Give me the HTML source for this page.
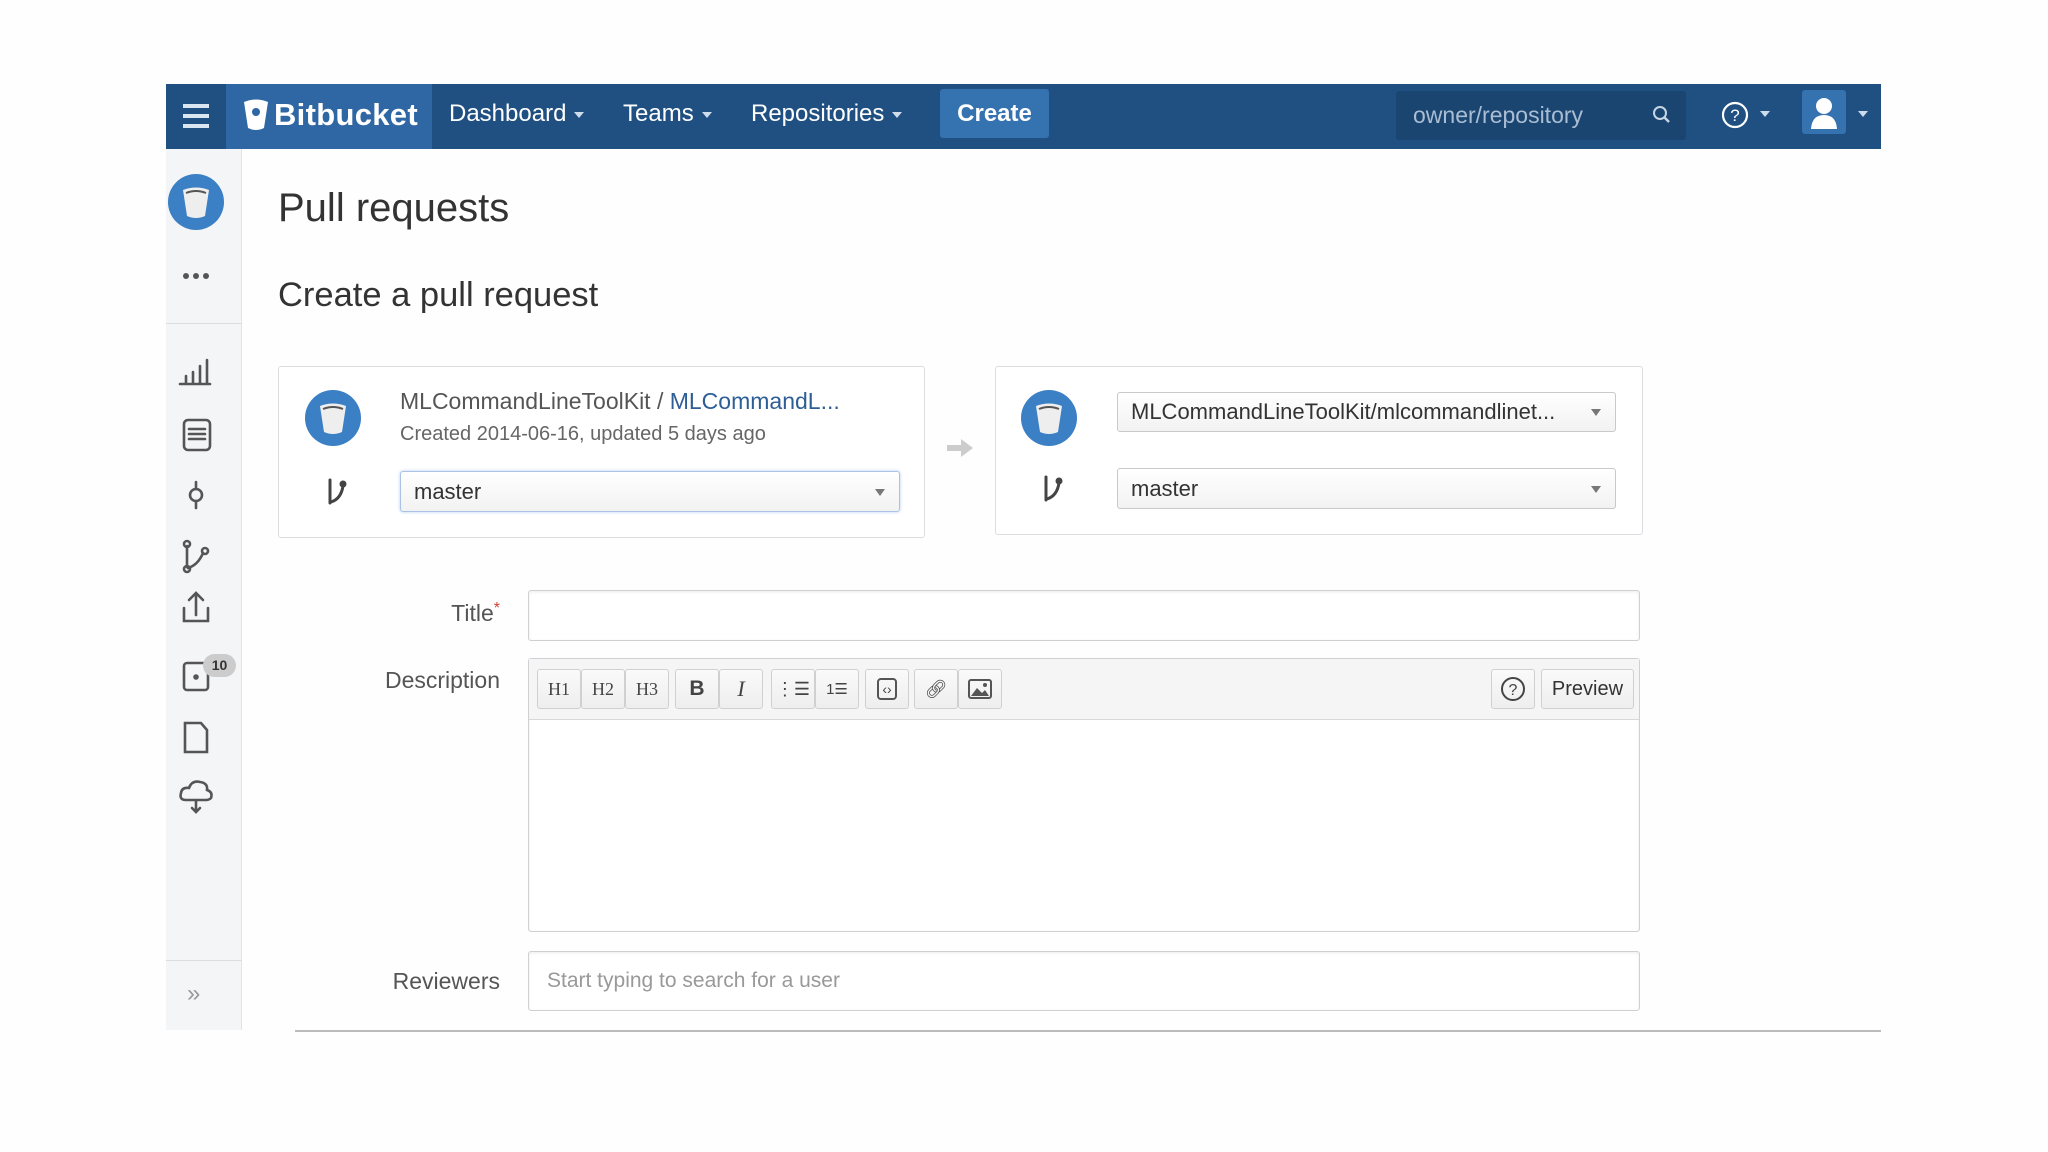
<!DOCTYPE html>
<html><head><meta charset="utf-8"><style>
*{box-sizing:border-box;margin:0;padding:0}
body{width:2048px;height:1152px;background:#fefefe;font-family:"Liberation Sans",Arial,sans-serif;position:relative;overflow:hidden;color:#333}
.a{position:absolute}
.nav{left:166px;top:84px;width:1715px;height:65px;background:#205081}
.navt{color:#fff;font-size:24px;top:100px}
.caret{display:inline-block;width:0;height:0;border-left:5px solid transparent;border-right:5px solid transparent;border-top:6px solid #cfdcec;vertical-align:middle;margin-left:8px}
.side{left:166px;top:149px;width:76px;height:881px;background:#f4f5f7;border-right:1px solid #e2e3e6}
.card{background:#fff;border:1px solid #dcdde0;border-radius:3px}
.sel{background:linear-gradient(#fff,#f2f2f2);border:1px solid #c8c9cc;border-radius:3px;font-size:22px;color:#333;padding-left:13px;display:flex;align-items:center}
.sel:after{content:"";position:absolute;right:14px;top:50%;margin-top:-3px;border-left:5px solid transparent;border-right:5px solid transparent;border-top:7px solid #777}
.lab{font-size:23px;color:#555;text-align:right;width:300px;left:200px}
.inp{background:#fff;border:1px solid #cfd0d3;border-radius:3px;box-shadow:inset 0 1px 3px rgba(0,0,0,.08)}
.tb{top:669px;height:40px;background:linear-gradient(#fafafa,#eeeeee);border:1px solid #d0d0d0;border-radius:3px;display:flex;align-items:center;justify-content:center;font-family:"Liberation Serif",serif;font-size:18px;color:#444}
</style></head><body>
<div class="a nav"></div>
<div class="a" style="left:226px;top:84px;width:206px;height:65px;background:#2f66a4"></div>
<div class="a" style="left:183px;top:104px;width:26px;height:4px;background:#dbe6f3;box-shadow:0 10px 0 #dbe6f3,0 20px 0 #dbe6f3"></div>
<svg class="a" style="left:243px;top:99px" width="26" height="32" viewBox="0 0 26 32"><path d="M1 3 Q13 -2 25 3 L21 29 Q13 33 5 29Z" fill="#fff"/><circle cx="13" cy="13" r="4" fill="#2f66a4"/></svg>
<div class="a" style="left:274px;top:97px;color:#fff;font-size:31px;font-weight:bold;letter-spacing:0.3px">Bitbucket</div>
<div class="a navt" style="left:449px">Dashboard<span class="caret"></span></div>
<div class="a navt" style="left:623px">Teams<span class="caret"></span></div>
<div class="a navt" style="left:751px">Repositories<span class="caret"></span></div>
<div class="a" style="left:940px;top:89px;width:109px;height:49px;background:#3572b0;border-radius:3px;color:#fff;font-size:24px;font-weight:bold;text-align:center;line-height:49px">Create</div>
<div class="a" style="left:1396px;top:91px;width:290px;height:49px;background:#1a4570;border-radius:3px;color:#a9bdd4;font-size:23px;padding:11px 0 0 17px">owner/repository</div>
<svg class="a" style="left:1651px;top:104px" width="22" height="22"><circle cx="9" cy="9" r="6" fill="none" stroke="#c7d4e4" stroke-width="2"/><path d="M13 13 L18 18" stroke="#c7d4e4" stroke-width="2.5"/></svg>
<svg class="a" style="left:1720px;top:100px" width="30" height="30"><circle cx="15" cy="15" r="12" fill="none" stroke="#fff" stroke-width="2.2"/><text x="15" y="21" font-size="17" fill="#fff" text-anchor="middle" font-family="Liberation Sans">?</text></svg>
<span class="a caret" style="left:1752px;top:111px"></span>
<div class="a" style="left:1802px;top:90px;width:44px;height:44px;background:#3572b0;border-radius:3px"></div>
<svg class="a" style="left:1809px;top:96px" width="30" height="34"><circle cx="15" cy="10" r="8" fill="#fff"/><path d="M2 33 Q3 19 15 19 Q27 19 28 33Z" fill="#fff"/></svg>
<span class="a caret" style="left:1850px;top:111px"></span>

<div class="a side"></div>
<div class="a" style="left:166px;top:323px;width:76px;height:1px;background:#dcdde0"></div>
<div class="a" style="left:166px;top:960px;width:76px;height:1px;background:#dcdde0"></div>
<div class="a" style="left:168px;top:174px;width:56px;height:56px;border-radius:50%;background:#3b7fc4"></div>
<svg class="a" style="left:181px;top:186px" width="30" height="34"><path d="M2 4 Q15 -1 28 4 L24 30 Q15 34 6 30Z" fill="#eee"/><path d="M5 7 Q15 3 25 7" stroke="#555" stroke-width="2" fill="none"/></svg>
<div class="a" style="left:183px;top:273px;width:6px;height:6px;border-radius:50%;background:#555;box-shadow:10px 0 0 #555,20px 0 0 #555"></div>
<svg class="a" style="left:176px;top:350px" width="44" height="500" fill="none" stroke="#555" stroke-width="2.6" stroke-linecap="round">
<path d="M4 34 H34 M10 33 V26 M17 33 V22 M24 33 V16 M31 33 V10"/>
<rect x="8" y="70" width="26" height="30" rx="4"/><path d="M13 79 H29 M13 84 H29 M13 89 H29"/>
<circle cx="20" cy="145" r="6"/><path d="M20 132 V139 M20 151 V158"/>
<circle cx="11" cy="194" r="3"/><circle cx="11" cy="219" r="3"/><circle cx="29" cy="201" r="3"/><path d="M11 196 V217 M27 203 Q22 215 12 218"/>
<path d="M8 258 V271 H32 V258 M20 265 V243 M13 250 L20 243 L27 250"/>
<rect x="8" y="313" width="24" height="27" rx="3"/><circle cx="20" cy="327" r="1.5" fill="#555"/>
<path d="M9 373 H25 L31 380 V402 H9Z"/>
<path d="M10 450 Q3 450 5 443 Q6 437 13 438 Q16 430 24 432 Q32 433 31 440 Q37 442 35 448 Q33 450 30 450 Z M20 450 V462 M16 458 L20 462 L24 458"/>
</svg>
<div class="a" style="left:203px;top:654px;width:33px;height:23px;border-radius:12px;background:#ccc;font-size:14px;font-weight:bold;color:#333;text-align:center;line-height:23px">10</div>
<div class="a" style="left:187px;top:980px;font-size:24px;color:#999">»</div>

<div class="a" style="left:278px;top:186px;font-size:40px;color:#333">Pull requests</div>
<div class="a" style="left:278px;top:276px;font-size:34.5px;color:#333">Create a pull request</div>

<div class="a card" style="left:278px;top:366px;width:647px;height:172px"></div>
<div class="a" style="left:305px;top:390px;width:56px;height:56px;border-radius:50%;background:#3b7fc4"></div>
<svg class="a" style="left:318px;top:402px" width="30" height="34"><path d="M2 4 Q15 -1 28 4 L24 30 Q15 34 6 30Z" fill="#eee"/><path d="M5 7 Q15 3 25 7" stroke="#555" stroke-width="2" fill="none"/></svg>
<div class="a" style="left:400px;top:388px;font-size:23px;color:#555;white-space:nowrap">MLCommandLineToolKit / <span style="color:#2d5e95">MLCommandL...</span></div>
<div class="a" style="left:400px;top:423px;font-size:20px;color:#666">Created 2014-06-16, updated 5 days ago</div>
<svg class="a" style="left:322px;top:477px" width="28" height="30" fill="none" stroke="#444" stroke-width="3" stroke-linecap="round"><path d="M8 3 V26 M21 9 Q19 22 9 25"/><circle cx="21" cy="7" r="2" fill="#444"/></svg>
<div class="a sel" style="left:400px;top:471px;width:500px;height:41px;border-color:#a9c2e6;box-shadow:0 0 3px #b7cdee">master</div>

<svg class="a" style="left:945px;top:436px" width="30" height="24"><path d="M2 9 H16 V3 L28 12 L16 21 V15 H2Z" fill="#ccc"/></svg>

<div class="a card" style="left:995px;top:366px;width:648px;height:169px"></div>
<div class="a" style="left:1021px;top:390px;width:56px;height:56px;border-radius:50%;background:#3b7fc4"></div>
<svg class="a" style="left:1034px;top:402px" width="30" height="34"><path d="M2 4 Q15 -1 28 4 L24 30 Q15 34 6 30Z" fill="#eee"/><path d="M5 7 Q15 3 25 7" stroke="#555" stroke-width="2" fill="none"/></svg>
<div class="a sel" style="left:1117px;top:392px;width:499px;height:40px">MLCommandLineToolKit/mlcommandlinet...</div>
<svg class="a" style="left:1038px;top:474px" width="28" height="30" fill="none" stroke="#444" stroke-width="3" stroke-linecap="round"><path d="M8 3 V26 M21 9 Q19 22 9 25"/><circle cx="21" cy="7" r="2" fill="#444"/></svg>
<div class="a sel" style="left:1117px;top:468px;width:499px;height:41px">master</div>

<div class="a lab" style="top:600px">Title<span style="color:#d04437;font-size:16px;vertical-align:top">*</span></div>
<div class="a inp" style="left:528px;top:590px;width:1112px;height:51px"></div>
<div class="a lab" style="top:667px">Description</div>
<div class="a inp" style="left:528px;top:658px;width:1112px;height:274px"></div>
<div class="a" style="left:529px;top:659px;width:1110px;height:61px;background:#f5f5f5;border-bottom:1px solid #d8d8d8"></div>
<div class="a tb" style="left:537px;width:44px">H1</div>
<div class="a tb" style="left:581px;width:44px">H2</div>
<div class="a tb" style="left:625px;width:44px">H3</div>
<div class="a tb" style="left:675px;width:44px;font-family:'Liberation Sans';font-weight:bold;font-size:21px">B</div>
<div class="a tb" style="left:719px;width:44px;font-style:italic;font-size:22px">I</div>
<div class="a tb" style="left:771px;width:44px;font-family:'Liberation Sans'">⋮☰</div>
<div class="a tb" style="left:815px;width:44px;font-family:'Liberation Sans';font-size:15px">1☰</div>
<div class="a tb" style="left:865px;width:44px;font-family:'Liberation Sans';font-size:14px"><span style="border:2px solid #555;border-radius:4px;padding:1px 3px">‹›</span></div>
<div class="a tb" style="left:914px;width:44px;font-family:'Liberation Sans'">🔗︎</div>
<div class="a tb" style="left:958px;width:44px"><svg width="24" height="20"><rect x="1" y="1" width="22" height="18" rx="2" fill="none" stroke="#555" stroke-width="2"/><path d="M3 17 L9 9 L14 14 L17 11 L21 17Z" fill="#555"/><circle cx="17" cy="6" r="2" fill="#555"/></svg></div>
<div class="a tb" style="left:1491px;width:44px"><svg width="28" height="28"><circle cx="14" cy="14" r="11" fill="none" stroke="#444" stroke-width="2"/><text x="14" y="20" font-size="16" fill="#444" text-anchor="middle" font-family="Liberation Sans">?</text></svg></div>
<div class="a tb" style="left:1541px;width:93px;font-family:'Liberation Sans';font-size:20px;color:#333">Preview</div>
<div class="a lab" style="top:968px">Reviewers</div>
<div class="a inp" style="left:528px;top:951px;width:1112px;height:60px;font-size:21px;color:#999;padding:17px 0 0 18px">Start typing to search for a user</div>
<div class="a" style="left:295px;top:1030px;width:1586px;height:2px;background:#bbb"></div>
</body></html>
